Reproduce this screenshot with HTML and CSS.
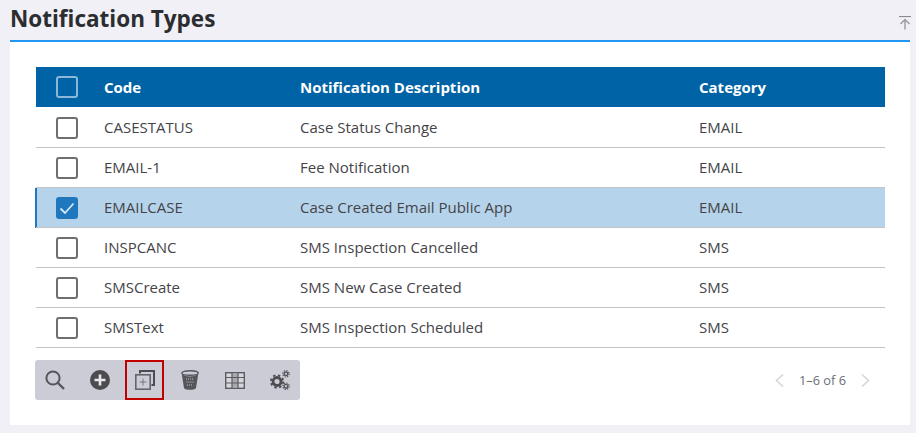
FILE: index.html
```html
<!DOCTYPE html>
<html lang="en">
<head>
    <meta charset="UTF-8">
    <title>Notification Types</title>
    <link rel="stylesheet" href="styles.css">
</head>
<body>
    <div class="page-header">
        <h1 class="page-title">Notification Types</h1>
        <svg class="collapse-icon" width="12" height="14" viewBox="0 0 12 14">
            <path d="M0 0.5H12" stroke="#8a8a90" stroke-width="1.2" fill="none"/>
            <path d="M6 13.5V3.5M1.5 8L6 3.5L10.5 8" stroke="#9a9aa0" stroke-width="1.4" fill="none"/>
        </svg>
    </div>

    <div class="panel">
        <div class="grid-table">
            <div class="row head-row">
                <div class="cell-check"><span class="checkbox head-box"></span></div>
                <div>Code</div>
                <div>Notification Description</div>
                <div>Category</div>
            </div>
            <div class="row">
                <div class="cell-check"><span class="checkbox"></span></div>
                <div>CASESTATUS</div>
                <div>Case Status Change</div>
                <div>EMAIL</div>
            </div>
            <div class="row">
                <div class="cell-check"><span class="checkbox"></span></div>
                <div>EMAIL-1</div>
                <div>Fee Notification</div>
                <div>EMAIL</div>
            </div>
            <div class="row selected-row">
                <div class="cell-check">
                    <span class="checkbox checked-box">
                        <svg width="22" height="22" viewBox="0 0 22 22">
                            <path d="M4.5 11.5L9 16L17.5 6.5" stroke="#d8e8f5" stroke-width="1.8" fill="none"/>
                        </svg>
                    </span>
                </div>
                <div>EMAILCASE</div>
                <div>Case Created Email Public App</div>
                <div>EMAIL</div>
            </div>
            <div class="row">
                <div class="cell-check"><span class="checkbox"></span></div>
                <div>INSPCANC</div>
                <div>SMS Inspection Cancelled</div>
                <div>SMS</div>
            </div>
            <div class="row">
                <div class="cell-check"><span class="checkbox"></span></div>
                <div>SMSCreate</div>
                <div>SMS New Case Created</div>
                <div>SMS</div>
            </div>
            <div class="row">
                <div class="cell-check"><span class="checkbox"></span></div>
                <div>SMSText</div>
                <div>SMS Inspection Scheduled</div>
                <div>SMS</div>
            </div>
        </div>

        <div class="table-footer">
            <div class="toolbar">
                <!-- search -->
                <div class="tool tool-search">
                    <svg width="20" height="20" viewBox="0 0 20 20">
                        <circle cx="8" cy="8" r="6.6" stroke="#55555a" stroke-width="2" fill="none"/>
                        <path d="M12.5 12.5L19 19" stroke="#55555a" stroke-width="2.4" fill="none"/>
                    </svg>
                </div>
                <!-- add -->
                <div class="tool tool-add">
                    <svg width="20" height="20" viewBox="0 0 20 20">
                        <circle cx="10" cy="10" r="10" fill="#4c4c50"/>
                        <path d="M10 4.5V15.5M4.5 10H15.5" stroke="#e8e8ee" stroke-width="2.6" fill="none"/>
                    </svg>
                </div>
                <!-- copy -->
                <div class="tool tool-copy">
                    <svg width="20" height="20" viewBox="0 0 20 20">
                        <path d="M5 3.5V1H19V15H16.5" stroke="#4c4c50" stroke-width="2" fill="none"/>
                        <rect x="0.8" y="4.8" width="14.4" height="14.4" stroke="#66666a" stroke-width="1.6" fill="#cbccd6"/>
                        <path d="M8 8.5V15.5M4.5 12H11.5" stroke="#77777c" stroke-width="1" fill="none"/>
                    </svg>
                </div>
                <!-- delete -->
                <div class="tool tool-delete">
                    <svg width="18" height="20" viewBox="0 0 18 20">
                        <ellipse cx="9" cy="3" rx="8.2" ry="2.3" stroke="#55555a" stroke-width="1.4" fill="none"/>
                        <path d="M0.8 4.5L3 18Q3.5 19.8 9 19.8Q14.5 19.8 15 18L17.2 4.5Q13 6.5 9 6.5Q5 6.5 0.8 4.5Z" fill="#55555a"/>
                        <path d="M5 9L13 9M5.5 12L12.5 12M6 15L12 15" stroke="#c0c0c8" stroke-width="1" stroke-dasharray="1 1" fill="none"/>
                    </svg>
                </div>
                <!-- columns -->
                <div class="tool tool-columns">
                    <svg width="20" height="17" viewBox="0 0 20 17">
                        <rect x="0.7" y="0.7" width="18.6" height="15.6" stroke="#5c5c60" stroke-width="1.4" fill="#d6d6de"/>
                        <rect x="7" y="1" width="6" height="15" fill="#a8a8b0"/>
                        <path d="M7 1V16M13 1V16M1 5.5H19M1 11H19" stroke="#5c5c60" stroke-width="1.2" fill="none"/>
                    </svg>
                </div>
                <!-- settings -->
                <div class="tool tool-settings">
                    <svg width="20" height="20" viewBox="0 0 20 20">
                        <circle cx="7" cy="11.5" r="4" stroke="#4c4c50" stroke-width="2.8" fill="none"/>
                        <circle cx="7" cy="11.5" r="6.2" stroke="#4c4c50" stroke-width="1.8" stroke-dasharray="2.4 2.5" fill="none"/>
                        <circle cx="16" cy="3.8" r="1.8" stroke="#55555a" stroke-width="1.4" fill="none"/>
                        <circle cx="16" cy="3.8" r="3.2" stroke="#55555a" stroke-width="1.2" stroke-dasharray="1.3 1.2" fill="none"/>
                        <circle cx="16" cy="16.2" r="1.8" stroke="#55555a" stroke-width="1.4" fill="none"/>
                        <circle cx="16" cy="16.2" r="3.2" stroke="#55555a" stroke-width="1.2" stroke-dasharray="1.3 1.2" fill="none"/>
                    </svg>
                </div>
            </div>

            <div class="pager">
                <svg width="9" height="13" viewBox="0 0 9 13">
                    <path d="M8 0.5L1.5 6.5L8 12.5" stroke="#d6d6d6" stroke-width="1.6" fill="none"/>
                </svg>
                <span class="pager-text">1–6 of 6</span>
                <svg width="9" height="13" viewBox="0 0 9 13">
                    <path d="M1 0.5L7.5 6.5L1 12.5" stroke="#d6d6d6" stroke-width="1.6" fill="none"/>
                </svg>
            </div>
        </div>
    </div>
</body>
</html>
```

FILE: styles.css
```css
/* Basic styling */
body {
    font-family: "Open Sans", Arial, sans-serif;
    background-color: #f0f0f6;
    margin: 0;
    padding: 0 6px 8px 10px;
    height: 433px;
    box-sizing: border-box;
    overflow: hidden;
    color: #444448;
}

.page-header {
    display: flex;
    justify-content: space-between;
    height: 40px;
    border-bottom: 2px solid #2196f3;
    width: 900px;
}

.page-title {
    margin: 0;
    font-size: 22.5px;
    line-height: 38px;
    font-weight: 700;
    color: #2b2d30;
}

.collapse-icon {
    margin-top: 16px;
    margin-right: -1px;
}

.panel {
    background-color: #ffffff;
    width: 900px;
    height: 383px;
    padding: 25px 25px 0 26px;
    box-sizing: border-box;
}

.grid-table {
    font-size: 15px;
}

.row {
    display: grid;
    grid-template-columns: 68px 196px 399px 1fr;
    align-items: center;
    height: 40px;
    box-sizing: border-box;
    border-bottom: 1px solid #c4c4c4;
}

/* body text sits a little above the row centre */
.row > div + div {
    margin-bottom: 2px;
}

.head-row {
    background-color: #0063a5;
    color: #ffffff;
    font-weight: 700;
    border-bottom: none;
    margin-bottom: 1px;
}

.head-row > div + div {
    margin-bottom: 0;
}

.selected-row {
    background-color: #b5d3eb;
    box-shadow: -1px 0 0 #1f78bd, inset 1px 0 0 #1f78bd;
}

.cell-check {
    display: flex;
    padding-left: 20px;
}

.checkbox {
    display: block;
    width: 22px;
    height: 22px;
    box-sizing: border-box;
    border: 2px solid #6e6e72;
    border-radius: 3px;
    background-color: #ffffff;
}

.head-box {
    background-color: transparent;
    border-color: #8ab8d8;
}

.checked-box {
    background-color: #1f78bd;
    border: none;
}

.checked-box svg {
    display: block;
}

.table-footer {
    display: flex;
    justify-content: space-between;
    align-items: center;
    margin-top: 12px;
    margin-left: -1px;
}

.toolbar {
    display: flex;
    background-color: #cbccd6;
    border-radius: 3px;
    height: 40px;
}

.tool {
    display: flex;
    align-items: center;
    justify-content: center;
    height: 40px;
    box-sizing: border-box;
}

.tool-search {
    width: 40px;
}

.tool-add {
    width: 50px;
}

.tool-copy {
    width: 39px;
    border: 2px solid #c00000;
}

.tool-delete {
    width: 50px;
    padding-left: 1px;
}

.tool-columns {
    width: 42px;
}

.tool-settings {
    width: 44px;
    padding-left: 4px;
}

.pager {
    display: flex;
    align-items: center;
    gap: 15px;
    padding-right: 15px;
    font-size: 12.8px;
    color: #6c6e74;
}
```
